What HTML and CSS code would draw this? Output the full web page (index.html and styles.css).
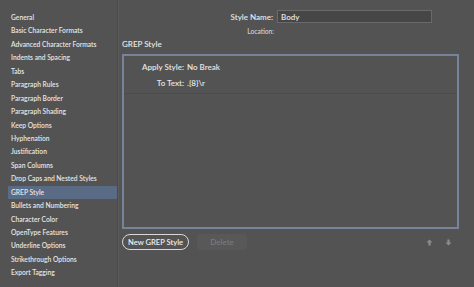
FILE: index.html
```html
<!DOCTYPE html>
<html>
<head>
<meta charset="utf-8">
<link rel="stylesheet" href="styles.css">
</head>
<body>
<div class="app">
  <nav class="sidebar">
    <div class="item">General</div>
    <div class="item">Basic Character Formats</div>
    <div class="item">Advanced Character Formats</div>
    <div class="item">Indents and Spacing</div>
    <div class="item">Tabs</div>
    <div class="item">Paragraph Rules</div>
    <div class="item">Paragraph Border</div>
    <div class="item">Paragraph Shading</div>
    <div class="item">Keep Options</div>
    <div class="item">Hyphenation</div>
    <div class="item">Justification</div>
    <div class="item">Span Columns</div>
    <div class="item">Drop Caps and Nested Styles</div>
    <div class="item selected">GREP Style</div>
    <div class="item">Bullets and Numbering</div>
    <div class="item">Character Color</div>
    <div class="item">OpenType Features</div>
    <div class="item">Underline Options</div>
    <div class="item">Strikethrough Options</div>
    <div class="item">Export Tagging</div>
  </nav>
  <main class="main">
    <div class="field-row">
      <span class="label">Style Name:</span>
      <span class="input">Body</span>
    </div>
    <div class="field-row loc">
      <span class="label small">Location:</span>
      <span class="input-space"></span>
    </div>
    <div class="section-title">GREP Style</div>
    <div class="grep-box">
      <div class="grep-entry">
        <div class="kv"><span class="k">Apply Style:</span><span class="v">No Break</span></div>
        <div class="kv"><span class="k">To Text:</span><span class="v">.{8}\r</span></div>
      </div>
    </div>
    <div class="actions">
      <button class="btn primary">New GREP Style</button>
      <button class="btn disabled">Delete</button>
      <span class="spacer"></span>
      <span class="arrow">
        <svg width="7" height="7" viewBox="0 0 7 7"><path d="M3.5 0.5 L6.5 3.5 H4.6 V6.5 H2.4 V3.5 H0.5 Z" fill="#8c8c8c"/></svg>
      </span>
      <span class="arrow">
        <svg width="7" height="7" viewBox="0 0 7 7"><path d="M3.5 6.5 L6.5 3.5 H4.6 V0.5 H2.4 V3.5 H0.5 Z" fill="#8c8c8c"/></svg>
      </span>
    </div>
  </main>
</div>
</body>
</html>
```
FILE: styles.css
```css
html, body {
  margin: 0;
  padding: 0;
  background: #535353;
}
body {
  width: 474px;
  height: 287px;
  overflow: hidden;
  font-family: "Lato", "Open Sans", sans-serif;
  font-size: 8px;
  font-weight: 600;
  color: #e6e6e6;
}
.app {
  display: flex;
  height: 287px;
}
.sidebar {
  width: 118px;
  flex: none;
  border-right: 1px solid #4a4a4a;
  box-shadow: 1px 0 0 #5c5c5c;
  padding-top: 11px;
  box-sizing: border-box;
  font-size: 6.7px;
}
.item {
  height: 13.45px;
  line-height: 13.45px;
  padding-left: 11px;
  white-space: nowrap;
}
.item.selected {
  background: #5a6b86;
  margin-left: 8px;
  padding-left: 3px;
}
.main {
  flex: 1;
  padding: 10px 15px 0 4px;
  display: flex;
  flex-direction: column;
}
.field-row {
  display: flex;
  align-items: center;
  height: 13px;
}
.field-row .label {
  width: 151px;
  text-align: right;
  padding-right: 4px;
}
.field-row .label.small {
  font-size: 6.6px;
  color: #cfcfcf;
  width: 152px;
}
.field-row.loc {
  margin-top: 2px;
  height: 12px;
}
.input {
  width: 155px;
  height: 13px;
  line-height: 13px;
  background: #464646;
  border: 1px solid #6a6a6a;
  box-sizing: border-box;
  padding-left: 3px;
}
.section-title {
  margin-top: 1px;
  height: 13px;
  line-height: 13px;
}
.grep-box {
  margin-top: 3px;
  height: 175px;
  border: 2px solid #76839b;
  box-sizing: border-box;
  width: 337px;
}
.grep-entry {
  border-bottom: 1px solid #4c4c4c;
  padding: 3px 0 2px;
}
.kv {
  display: flex;
  height: 16px;
  line-height: 16px;
}
.kv .k {
  width: 60px;
  text-align: right;
  padding-right: 3px;
}
.actions {
  display: flex;
  align-items: center;
  margin-top: 5px;
  width: 337px;
}
.btn {
  font: inherit;
  height: 16px;
  padding: 0 5px;
  border-radius: 8px;
  line-height: 14px;
}
.btn.primary {
  border: 1px solid #d8d8d8;
  background: transparent;
  color: #f0f0f0;
  font-size: 7.6px;
}
.btn.disabled {
  margin-left: 8px;
  border: none;
  background: #585858;
  color: #7a7a7a;
  width: 50px;
  border-radius: 3px;
}
.spacer {
  flex: 1;
}
.arrow {
  display: flex;
  width: 7px;
  margin-right: 12px;
}
.arrow:last-child {
  margin-right: 7px;
}
```
